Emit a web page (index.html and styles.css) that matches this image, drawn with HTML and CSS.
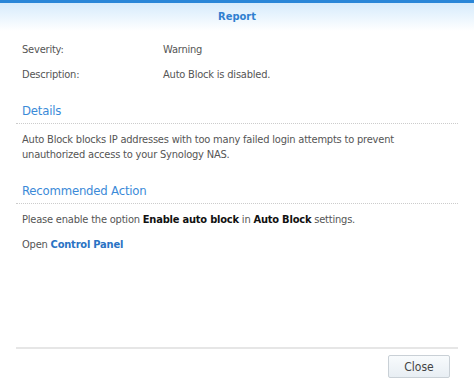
FILE: index.html
```html
<!DOCTYPE html>
<html>
<head>
<meta charset="utf-8">
<link rel="stylesheet" href="styles.css">
</head>
<body>
<div class="dialog">
  <div class="titlebar">Report</div>
  <div class="content">
    <div class="row"><span class="label">Severity:</span><span class="value">Warning</span></div>
    <div class="row"><span class="label">Description:</span><span class="value">Auto Block is disabled.</span></div>
    <h2 class="heading heading-details">Details</h2>
    <p class="para">Auto Block blocks IP addresses with too many failed login attempts to prevent<br>unauthorized access to your Synology NAS.</p>
    <h2 class="heading heading-action">Recommended Action</h2>
    <p class="para">Please enable the option <b class="strong">Enable auto block</b> in <b class="strong">Auto Block</b> settings.</p>
    <p class="para para-open">Open <a class="link">Control Panel</a></p>
  </div>
  <div class="footer">
    <button class="btn">Close</button>
  </div>
</div>
</body>
</html>
```
FILE: styles.css
```css
html, body {
  margin: 0;
  padding: 0;
  background: #fff;
}
.dialog {
  width: 474px;
  height: 383px;
  display: flex;
  flex-direction: column;
  font-family: "DejaVu Sans Condensed", "DejaVu Sans", sans-serif;
  font-size: 11px;
  letter-spacing: -0.2px;
  color: #555;
  border-top: 3px solid #2a86d8;
  box-sizing: border-box;
}
.titlebar {
  height: 28px;
  line-height: 28px;
  text-align: center;
  font-weight: bold;
  color: #2f7fd0;
  font-size: 11px;
  letter-spacing: 0;
  background: linear-gradient(#d6ebfc, #fff);
}
.content {
  flex: 1;
  padding: 0 16px 0 22px;
}
.row {
  display: flex;
  height: 25px;
  line-height: 25px;
}
.row:first-child { margin-top: 6px; }
.label { width: 141px; }
.heading {
  margin: 0;
  font-weight: normal;
  font-size: 13px;
  letter-spacing: -0.2px;
  color: #3b8ad8;
  padding-bottom: 5px;
  border-bottom: 1px dotted #ccc;
  margin-left: -6px;
  padding-left: 6px;
}
.heading-details { margin-top: 16px; }
.heading-action { margin-top: 21px; }
.para {
  margin: 8px 0 0 0;
  line-height: 15px;
}
.para-open { margin-top: 10px; }
.strong { color: #111; }
.link { color: #2a73c4; font-weight: bold; }
.footer {
  margin: 0 16px 5px 16px;
  border-top: 2px solid #e6e6e6;
  display: flex;
  justify-content: flex-end;
  padding-top: 6px;
  padding-right: 8px;
}
.btn {
  width: 62px;
  height: 23px;
  font-family: inherit;
  font-size: 12px;
  color: #444;
  background: linear-gradient(#f8fbfd, #e8eef3);
  border: 1px solid #c9d0d6;
  border-radius: 2px;
}
```
